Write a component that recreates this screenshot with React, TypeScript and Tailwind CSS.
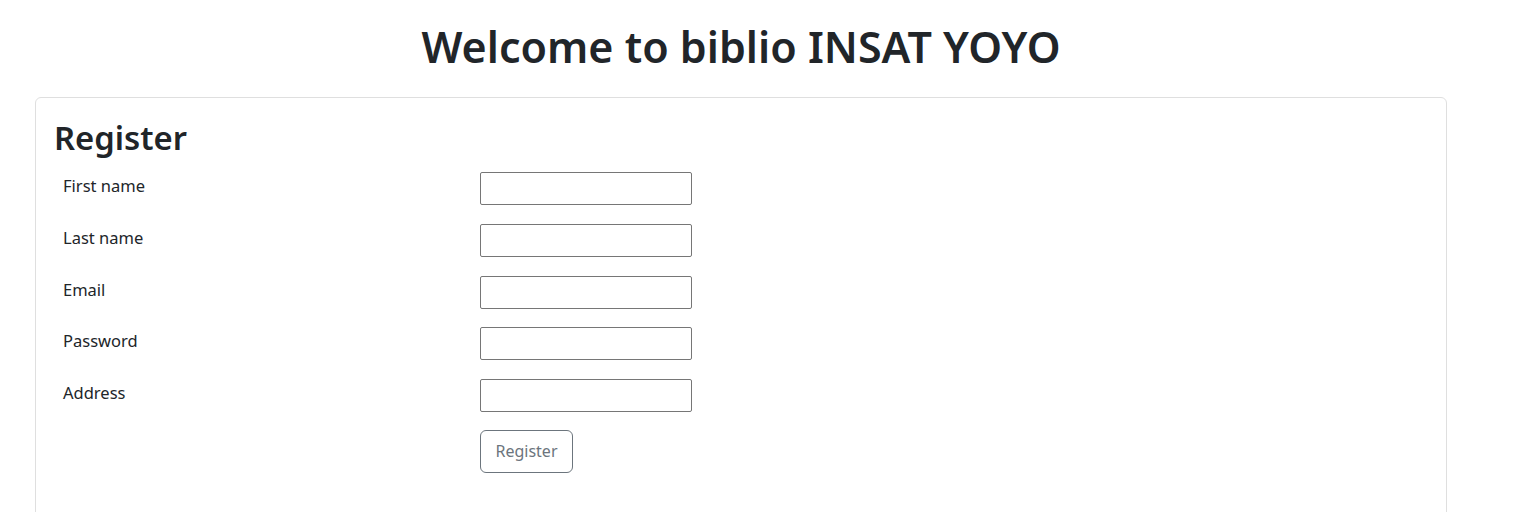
const FIELDS = [
  { label: "First name", type: "text" },
  { label: "Last name", type: "text" },
  { label: "Email", type: "email" },
  { label: "Password", type: "password" },
  { label: "Address", type: "text" },
];

export default function App() {
  return (
    <div className="min-h-[512px] bg-white text-[#212529] font-['Noto_Sans',sans-serif]">
      <div className="ml-[35px] w-[1412px]">
        <h1 className="pt-[23px] text-center text-[43px] font-semibold leading-[48px]">
          Welcome to biblio INSAT YOYO
        </h1>
        <div className="mt-[26px] h-[440px] rounded-md border border-[#dfdfdf] px-[18px] pt-[20px]">
          <h2 className="text-[32.8px] font-semibold leading-[40px]">Register</h2>
          <form className="mt-[14px] flex flex-col gap-[18.75px]" onSubmit={(e) => e.preventDefault()}>
            {FIELDS.map((f) => (
              <div key={f.label} className="flex items-start">
                <label className="w-[426px] pl-[9px] pt-[2px] text-[16.5px] leading-6">{f.label}</label>
                <input
                  type={f.type}
                  className="h-[33px] w-[212px] rounded-[2px] border border-[#767676] bg-white px-2 text-[13px] outline-none"
                />
              </div>
            ))}
            <div className="-mt-[1px] flex">
              <div className="w-[426px]" />
              <button
                type="submit"
                className="h-[43px] w-[93px] rounded-[6px] border border-[#6c757d] text-base text-[#6c757d]"
              >
                Register
              </button>
            </div>
          </form>
        </div>
      </div>
    </div>
  );
}
